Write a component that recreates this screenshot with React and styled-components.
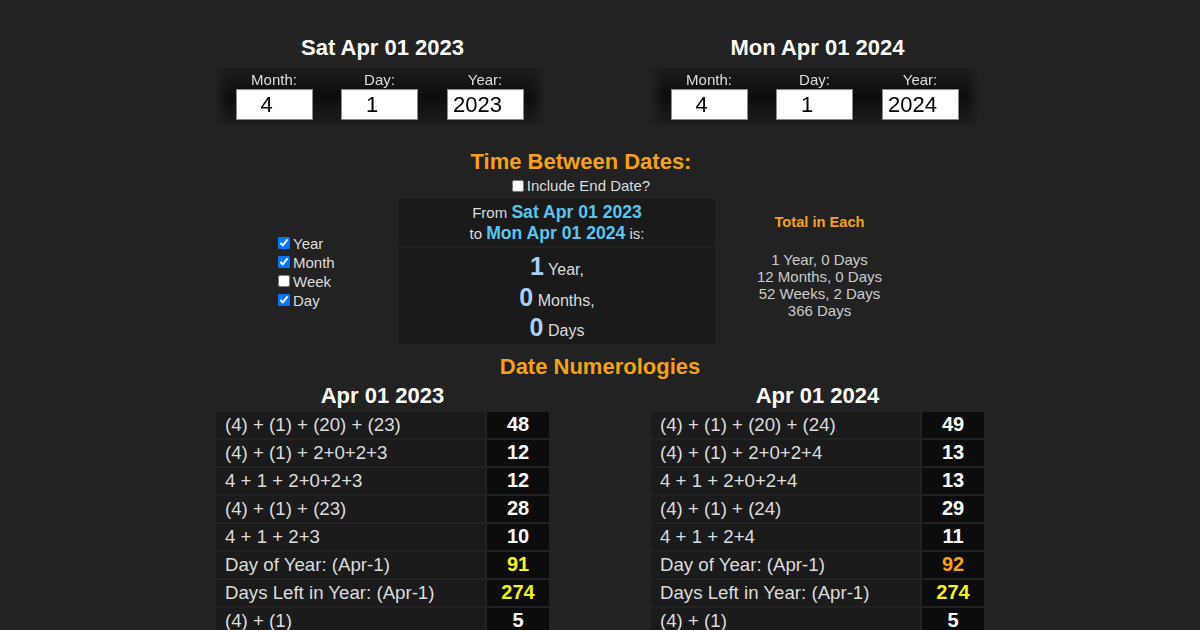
import React from 'react';
import styled, { createGlobalStyle } from 'styled-components';

const Global = createGlobalStyle`
  html, body { margin: 0; padding: 0; background: #222; }
  body { font-family: "Liberation Sans", Arial, sans-serif; color: #ddd; overflow: hidden; }
`;

const Page = styled.div`
  padding-top: 35px;
`;

const DateRow = styled.div`
  width: 870px;
  margin: 0 auto;
  display: grid;
  grid-template-columns: 1fr 1fr;
`;

const DateCol = styled.div`
  display: flex;
  flex-direction: column;
  align-items: center;
`;

const DateTitle = styled.div`
  font-size: 22px;
  font-weight: bold;
  line-height: 25px;
  color: #fff;
`;

const DateBox = styled.div`
  margin-top: 8px;
  margin-right: 6px;
  display: flex;
  gap: 28.5px;
  padding: 3px 20px 5px;
  background: linear-gradient(to bottom, rgba(0,0,0,0.15), rgba(0,0,0,0.62) 50%, rgba(0,0,0,0.15));
  -webkit-mask-image: linear-gradient(to right, transparent, #000 12px, #000 calc(100% - 12px), transparent);
  mask-image: linear-gradient(to right, transparent, #000 12px, #000 calc(100% - 12px), transparent);
`;

const Field = styled.label`
  display: flex;
  flex-direction: column;
  align-items: center;
`;

const FieldLabel = styled.span`
  font-size: 15px;
  line-height: 18px;
  color: #ddd;
`;

const DateInput = styled.input`
  box-sizing: border-box;
  width: 77px;
  height: 31px;
  margin: 0;
  border: 1px solid #8a8a8a;
  background: #fff;
  color: #000;
  font-family: "Liberation Sans", Arial, sans-serif;
  font-size: 22px;
  text-align: center;
  padding: 0 15px 0 0;
  outline: none;
`;

const Between = styled.section`
  width: 662px;
  margin-left: calc(50% - 338px);
  margin-top: 24px;
`;

const BetweenHeading = styled.h2`
  width: 638px;
  margin: 0;
  text-align: center;
  font-size: 22px;
  line-height: 25px;
  font-weight: bold;
  color: #f5a11c;
`;

const IncludeRow = styled.label`
  width: 638px;
  margin-top: 3px;
  display: flex;
  justify-content: center;
  align-items: center;
  gap: 3px;
  font-size: 15px;
  line-height: 17px;
  color: #ddd;
`;

const Check = styled.input`
  width: 12px;
  height: 12px;
  margin: 0;
`;

const BetweenGrid = styled.div`
  margin-top: 5px;
  display: grid;
  grid-template-columns: 137px 316px 209px;
`;

const UnitList = styled.div`
  align-self: center;
  padding-left: 16px;
  display: flex;
  flex-direction: column;
`;

const UnitItem = styled.label`
  display: flex;
  align-items: center;
  gap: 3px;
  font-size: 15px;
  line-height: 19px;
  color: #ddd;
`;

const ResultCol = styled.div`
  display: flex;
  flex-direction: column;
  gap: 2px;
`;

const ResultHead = styled.div`
  background: #1a1a1a;
  padding: 2.5px 0;
  text-align: center;
  font-size: 15px;
  line-height: 21px;
  color: #ddd;
`;

const HeadLine = styled.div`
  height: 21px;
`;

const DateHi = styled.b`
  font-size: 17.6px;
  line-height: 21px;
  color: #5ac6f0;
`;

const ResultBody = styled.div`
  background: #1a1a1a;
  padding: 3px 0 1.5px;
  text-align: center;
`;

const AmountLine = styled.div`
  height: 30.5px;
  font-size: 16px;
  line-height: 30.5px;
  color: #ddd;
`;

const Amount = styled.b`
  font-size: 25px;
  line-height: 30.5px;
  color: #a6d3f7;
`;

const Totals = styled.div`
  padding-top: 15px;
  text-align: center;
  font-size: 15px;
  line-height: 17px;
  color: #ccc;
`;

const TotalsTitle = styled.div`
  font-size: 14.67px;
  font-weight: bold;
  color: #f5a11c;
  margin-bottom: 19.7px;
`;

const NumHeading = styled.h2`
  margin: 10px 0 0;
  text-align: center;
  font-size: 22px;
  line-height: 25px;
  font-weight: bold;
  color: #f5a11c;
`;

const NumGrid = styled.div`
  width: 870px;
  margin: 4px auto 0;
  display: grid;
  grid-template-columns: 1fr 1fr;
`;

const NumCol = styled.div`
  display: flex;
  flex-direction: column;
  align-items: center;
`;

const NumTitle = styled.div`
  font-size: 22px;
  font-weight: bold;
  line-height: 25px;
  color: #fff;
`;

const NumTable = styled.div`
  margin-top: 3.7px;
  display: grid;
  grid-template-columns: 269px 62px;
  grid-auto-rows: 26px;
  gap: 2px;
`;

const NumLabel = styled.div`
  background: #1b1b1b;
  padding-left: 9px;
  display: flex;
  align-items: center;
  font-size: 18.67px;
  color: #ddd;
  white-space: nowrap;
`;

const NumValue = styled.div`
  background: #0c0c0c;
  display: flex;
  align-items: center;
  justify-content: center;
  font-size: 20px;
  font-weight: bold;
  color: ${(p) => p.$tone === 'yellow' ? '#f4f423' : p.$tone === 'orange' ? '#f5a11c' : '#fff'};
`;

const dates = [
  { title: 'Sat Apr 01 2023', m: '4', d: '1', y: '2023' },
  { title: 'Mon Apr 01 2024', m: '4', d: '1', y: '2024' },
];

const numerologies = [
  {
    title: 'Apr 01 2023',
    rows: [
      ['(4) + (1) + (20) + (23)', '48'],
      ['(4) + (1) + 2+0+2+3', '12'],
      ['4 + 1 + 2+0+2+3', '12'],
      ['(4) + (1) + (23)', '28'],
      ['4 + 1 + 2+3', '10'],
      ['Day of Year: (Apr-1)', '91', 'yellow'],
      ['Days Left in Year: (Apr-1)', '274', 'yellow'],
      ['(4) + (1)', '5'],
    ],
  },
  {
    title: 'Apr 01 2024',
    rows: [
      ['(4) + (1) + (20) + (24)', '49'],
      ['(4) + (1) + 2+0+2+4', '13'],
      ['4 + 1 + 2+0+2+4', '13'],
      ['(4) + (1) + (24)', '29'],
      ['4 + 1 + 2+4', '11'],
      ['Day of Year: (Apr-1)', '92', 'orange'],
      ['Days Left in Year: (Apr-1)', '274', 'yellow'],
      ['(4) + (1)', '5'],
    ],
  },
];

export default function App() {
  return (
    <Page>
      <Global />
      <DateRow>
        {dates.map((dt) => (
          <DateCol key={dt.title}>
            <DateTitle>{dt.title}</DateTitle>
            <DateBox>
              <Field>
                <FieldLabel>Month:</FieldLabel>
                <DateInput defaultValue={dt.m} />
              </Field>
              <Field>
                <FieldLabel>Day:</FieldLabel>
                <DateInput defaultValue={dt.d} />
              </Field>
              <Field>
                <FieldLabel>Year:</FieldLabel>
                <DateInput defaultValue={dt.y} />
              </Field>
            </DateBox>
          </DateCol>
        ))}
      </DateRow>

      <Between>
        <BetweenHeading>Time Between Dates:</BetweenHeading>
        <IncludeRow>
          <Check type="checkbox" />
          Include End Date?
        </IncludeRow>
        <BetweenGrid>
          <UnitList>
            <UnitItem><Check type="checkbox" defaultChecked />Year</UnitItem>
            <UnitItem><Check type="checkbox" defaultChecked />Month</UnitItem>
            <UnitItem><Check type="checkbox" />Week</UnitItem>
            <UnitItem><Check type="checkbox" defaultChecked />Day</UnitItem>
          </UnitList>
          <ResultCol>
            <ResultHead>
              <HeadLine>From <DateHi>Sat Apr 01 2023</DateHi></HeadLine>
              <HeadLine>to <DateHi>Mon Apr 01 2024</DateHi> is:</HeadLine>
            </ResultHead>
            <ResultBody>
              <AmountLine><Amount>1</Amount> Year,</AmountLine>
              <AmountLine><Amount>0</Amount> Months,</AmountLine>
              <AmountLine><Amount>0</Amount> Days</AmountLine>
            </ResultBody>
          </ResultCol>
          <Totals>
            <TotalsTitle>Total in Each</TotalsTitle>
            <div>1 Year, 0 Days</div>
            <div>12 Months, 0 Days</div>
            <div>52 Weeks, 2 Days</div>
            <div>366 Days</div>
          </Totals>
        </BetweenGrid>
      </Between>

      <NumHeading>Date Numerologies</NumHeading>
      <NumGrid>
        {numerologies.map((n) => (
          <NumCol key={n.title}>
            <NumTitle>{n.title}</NumTitle>
            <NumTable>
              {n.rows.map(([label, value, tone], i) => (
                <React.Fragment key={i}>
                  <NumLabel>{label}</NumLabel>
                  <NumValue $tone={tone}>{value}</NumValue>
                </React.Fragment>
              ))}
            </NumTable>
          </NumCol>
        ))}
      </NumGrid>
    </Page>
  );
}
